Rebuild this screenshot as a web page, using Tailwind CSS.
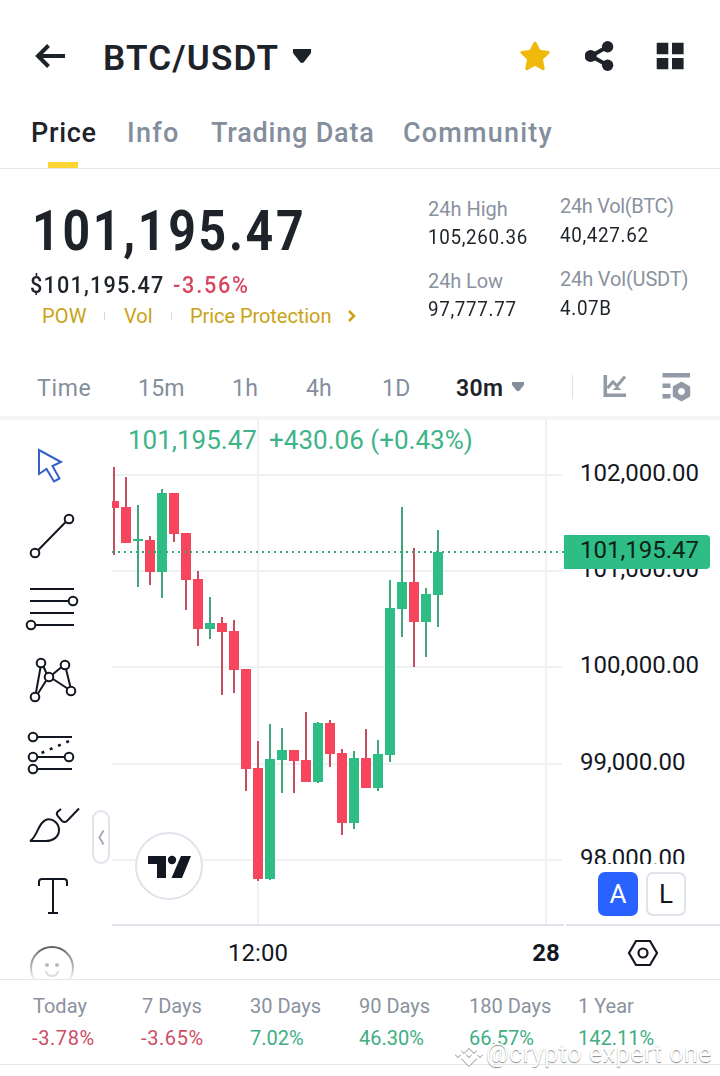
<!DOCTYPE html>
<html lang="en">
<head>
<meta charset="utf-8">
<title>BTC/USDT</title>
<script src="https://cdn.jsdelivr.net/npm/@tailwindcss/browser@4"></script>
</head>
<body class="w-[720px] h-[1076px] bg-white overflow-hidden whitespace-nowrap text-[#1e2329] font-['Roboto','Liberation_Sans',sans-serif]">
<div class="relative flex flex-col w-[720px] h-[1076px]">

  <!-- Header -->
  <header class="flex items-center h-[112px] shrink-0">
    <svg class="w-[32px] h-[26px] ml-[34px]" viewBox="34 43 32 26" fill="none" stroke="#1e2329" stroke-width="4"><path d="M65 56H38M48.500 45.500L38 56l10.500 10.500"/></svg>
    <h1 class="ml-[37px] w-[176px] mt-[5px] text-[35px] leading-[40px] font-semibold tracking-[1.2px]">BTC/USDT</h1>
    <svg class="w-[20px] h-[16px] ml-[13px]" viewBox="0 0 20 16" fill="#1e2329"><path d="M1 1h18v4L12 14q-2 2-4 0L1 5z"/></svg>
    <svg class="w-[32px] h-[32px] ml-[207px]" viewBox="519 40 32 32" fill="#f0b90b" stroke="#f0b90b" stroke-width="3" stroke-linejoin="round"><path d="M535 43l4.200 8.200 9 1.200-6.800 6.600 1.800 9.700-8.200-4.400-8.200 4.400 1.800-9.700-6.800-6.600 9-1.200z"/></svg>
    <svg class="w-[30px] h-[32px] ml-[34px]" viewBox="585 40 30 32" fill="#1e2329"><path d="M608 46.500L591 56l17 9.500" fill="none" stroke="#1e2329" stroke-width="4"/><circle cx="590.700" cy="56" r="6"/><circle cx="607.600" cy="46.700" r="5.700"/><circle cx="607.600" cy="65.300" r="5.700"/></svg>
    <svg class="w-[28px] h-[28px] ml-[41px]" viewBox="656 42 28 28" fill="#1e2329"><path d="M656.700 42.700h11.600v11.500h-11.600zM672 42.700h11.600v11.500H672zM656.700 58h11.600v11.300h-11.600zM672 58h11.600v11.300H672z"/></svg>
  </header>

  <!-- Tabs -->
  <nav class="flex h-[57px] shrink-0 border-b border-[#e6e8ea] text-[27px] leading-[42px] font-[460] text-[#848e9c]">
    <div class="ml-[31px] w-[66px] text-[#1e2329] flex flex-col"><span class="h-[50px] tracking-[0.7px]">Price</span><span class="w-[30px] h-[6px] ml-[17px] bg-[#fcd535]"></span></div>
    <span class="ml-[30px] w-[55px] tracking-[1.3px]">Info</span>
    <span class="ml-[29px] w-[162px] tracking-[0.800px]">Trading Data</span>
    <span class="ml-[30px] tracking-[1.200px]">Community</span>
  </nav>

  <!-- Price summary -->
  <section class="flex h-[188px] shrink-0">
    <div class="w-[428px] flex flex-col">
      <div class="ml-[32px] mt-[32px] h-[60px] w-[330px] text-[56px] leading-[60px] font-bold tracking-[3.200px] origin-left scale-x-[0.86]">101,195.47</div>
      <div class="flex ml-[30px] mt-[10px] h-[28px] text-[23.500px] leading-[28px] font-medium"><span class="w-[143px] tracking-[1.300px] origin-left scale-x-[0.92]">$101,195.47</span><span class="text-[#d9475f] tracking-[1.900px] origin-left scale-x-[0.92]">-3.56%</span></div>
      <div class="flex items-center ml-[42px] mt-[3px] h-[28px] text-[20px] leading-[28px] text-[#c9a316]">
        <span class="w-[62px] tracking-[0.200px]">POW</span><span class="w-px h-[8px] bg-[#d5d9df]"></span>
        <span class="w-[66px] pl-[19px]">Vol</span><span class="w-px h-[8px] bg-[#d5d9df]"></span>
        <span class="w-[157px] pl-[18px] tracking-[-0.060px]">Price Protection</span>
        <svg class="w-[10px] h-[12px] ml-[18px]" viewBox="0 0 10 12" fill="none" stroke="#c9a316" stroke-width="2.500"><path d="M2 1l5 5-5 5"/></svg>
      </div>
    </div>
    <div class="w-[132px] pt-[26px] text-[20px] leading-[28px] flex flex-col">
      <span class="text-[#8a929e]">24h High</span><span class="tracking-[0.720px] origin-left scale-x-[0.94]">105,260.36</span>
      <span class="mt-[16px] text-[#8a929e] tracking-[-0.100px]">24h Low</span><span class="tracking-[0.720px] origin-left scale-x-[0.94]">97,777.77</span>
    </div>
    <div class="pt-[23px] text-[20px] leading-[29px] flex flex-col">
      <span class="text-[#8a929e] tracking-[-0.320px]">24h Vol(BTC)</span><span class="tracking-[0.720px] origin-left scale-x-[0.94]">40,427.62</span>
      <span class="mt-[15px] text-[#8a929e] tracking-[-0.160px]">24h Vol(USDT)</span><span class="tracking-[0.720px] origin-left scale-x-[0.94]">4.07B</span>
    </div>
  </section>

  <!-- Intervals -->
  <nav class="flex items-center h-[63px] shrink-0 border-b-4 border-[#f5f5f6] text-[23px] text-[#848e9c]">
    <span class="pt-[5px] ml-[37px] w-[101px] tracking-[0.700px]">Time</span>
    <span class="pt-[5px] w-[94px] tracking-[0.200px]">15m</span>
    <span class="pt-[5px] w-[74px] tracking-[0.200px]">1h</span>
    <span class="pt-[5px] w-[76px]">4h</span>
    <span class="pt-[5px] w-[74px] tracking-[0.300px]">1D</span>
    <span class="pt-[5px] w-[55px] font-semibold text-[#1e2329] tracking-[0.300px]">30m</span>
    <svg class="w-[14px] h-[12px]" viewBox="0 0 14 12" fill="#848e9c"><path d="M1 1h12v3L8.500 9.500q-1.500 1.500-3 0L1 4z"/></svg>
    <span class="w-px h-[24px] ml-[47px] bg-[#dfe2e7]"></span>
    <svg class="w-[24px] h-[24px] ml-[30px]" viewBox="603 375 24 24" fill="none" stroke="#929aa5" stroke-width="3.600"><path d="M605.300 375v20.300H626"/><path d="M607.500 388l5.500-6 4 4 8-9.500" stroke-width="3"/><path d="M612.500 390l4.500-4 4.500 4z" fill="#929aa5" stroke="none"/></svg>
    <svg class="w-[30px] h-[30px] ml-[35px]" viewBox="662 372 30 30" fill="#929aa5"><path d="M662.500 373h27.500v4.500h-27.500zM662.500 383.500h8v4.500h-8zM662.500 394h8v4.500h-8z"/><path fill-rule="evenodd" d="M681.500 381.500l8.700 5v10l-8.700 5-8.700-5v-10zM681.500 388a3.500 3.500 0 1 0 .01 0z"/></svg>
  </nav>

  <!-- Chart -->
  <main class="flex h-[560px] shrink-0 border-b border-[#e6e8ea] text-[#131722]">
    <!-- Drawing tools -->
    <aside class="relative w-[112px] h-[559px] pt-[8px] flex flex-col overflow-hidden">
      <svg class="w-[112px] h-[72px] shrink-0" viewBox="0 428 112 72" fill="none" stroke="#3560cc" stroke-width="2"><path d="M39 450v24l7.500-5 7.500 12.500 5.500-3-7-12.500 8.500-4z"/></svg>
      <svg class="w-[112px] h-[72px] shrink-0" viewBox="0 500 112 72" fill="none" stroke="#131722" stroke-width="2"><path d="M38.300 550l27.400-28"/><circle cx="35" cy="553" r="4.300"/><circle cx="69" cy="519" r="4.300"/></svg>
      <svg class="w-[112px] h-[72px] shrink-0" viewBox="0 572 112 72" fill="none" stroke="#131722" stroke-width="2"><path d="M30 589h44M30 601h38M30 613h44M36 625h38"/><circle cx="73" cy="601" r="4.300"/><circle cx="31" cy="625" r="4.300"/></svg>
      <svg class="w-[112px] h-[72px] shrink-0" viewBox="0 644 112 72" fill="none" stroke="#131722" stroke-width="2"><path d="M40.500 667.500L36 692.500M43.500 666.500l3 7M52.500 674.500l8.500-7M66 669l4.200 17M53 679l14.500 9.500M46.200 680.500L38 693.500"/><circle cx="41" cy="663" r="4.300"/><circle cx="65" cy="665" r="4.300"/><circle cx="49" cy="677" r="4.300"/><circle cx="71" cy="691" r="4.300"/><circle cx="35" cy="697" r="4.300"/></svg>
      <svg class="w-[112px] h-[72px] shrink-0" viewBox="0 716 112 72" fill="none" stroke="#131722" stroke-width="2"><path d="M38 737h34M38 757h26M38 769h34"/><path d="M41.500 753l30-13" stroke-width="2.600" stroke-dasharray="3 6"/><circle cx="33" cy="737" r="4.300"/><circle cx="33" cy="757" r="4.300"/><circle cx="69" cy="757" r="4.300"/><circle cx="33" cy="769" r="4.300"/></svg>
      <svg class="w-[112px] h-[72px] shrink-0" viewBox="0 788 112 72" fill="none" stroke="#131722" stroke-width="2"><path d="M30 841c7-3 8.500-20 17-21.500 6.500-1 12 4 12 10.500 0 7-6 11-13 11z"/><path d="M61 809l-3.300 2.800q-1.800 1.700 0 4l4.300 5.200q2.500 2 5 0L79 808.500"/></svg>
      <svg class="w-[112px] h-[72px] shrink-0" viewBox="0 860 112 72" fill="none" stroke="#131722" stroke-width="2"><path d="M39 886v-4q0-3 3-3h22q3 0 3 3v4M53 879v34M48 913h10"/></svg>
      <svg class="w-[112px] h-[47px] shrink-0" viewBox="0 932 112 47" fill="none"><defs><linearGradient id="fade" x1="0" x2="0" y1="944" y2="979" gradientUnits="userSpaceOnUse"><stop offset="0" stop-color="#555"/><stop offset="1" stop-color="#eee"/></linearGradient></defs><circle cx="52" cy="968" r="21" stroke="url(#fade)" stroke-width="2"/><circle cx="47" cy="965" r="2" fill="#bbb"/><circle cx="57" cy="965" r="2" fill="#bbb"/><path d="M46 971q1 5 6 5t6-5" stroke="#ddd" stroke-width="2"/></svg>
      <!-- Collapse handle over the tool column -->
      <span class="absolute left-[92px] top-[390px] w-[18px] h-[54px] rounded-[9px] border-2 border-[#e0e3eb] bg-white flex items-center justify-center"><svg class="w-[7px] h-[15px]" viewBox="0 0 7 15" fill="none" stroke="#a3a6af" stroke-width="1.800"><path d="M5.500 .500l-4 7 4 7"/></svg></span>
    </aside>

    <div class="flex flex-col w-[608px]">
      <div class="flex h-[504px]">
        <!-- Plot -->
        <div class="relative w-[452px] h-[504px]">
          <svg id="plot" class="w-[452px] h-[504px]" viewBox="112 420 452 504">
            <path d="M112 475h450M112 571h450M112 667h450M112 764h450M112 860h450M258 420v504M546 420v504" stroke="#f0f1f2" stroke-width="2" fill="none"/>
            <g id="candles"></g>
            <path d="M112 552h452" stroke="#35a67c" stroke-width="2" stroke-dasharray="2 4"/>
            <circle cx="169" cy="866" r="33" fill="#fff" stroke="#e0e3eb" stroke-width="2"/>
            <path fill="#131722" d="M148 856h18v22h-9v-14h-9zM181 856h10l-9 22h-10.500z"/><circle cx="172" cy="860" r="4.200" fill="#131722"/>
          </svg>
          <div class="absolute left-[16px] top-[5px] flex text-[26px] leading-[30px] text-[#3fb388]"><span class="w-[141px]">101,195.47</span><span class="tracking-[0.020px]">+430.06 (+0.43%)</span></div>
        </div>
        <!-- Price scale -->
        <div class="relative w-[156px] flex flex-col">
          <div class="h-[444px] pt-[5px] pl-[16px] overflow-hidden text-[24px]">
            <div class="h-[96px] leading-[96px]">102,000.00</div>
            <div class="h-[96px] leading-[96px]">101,000.00</div>
            <div class="h-[96px] leading-[96px]">100,000.00</div>
            <div class="h-[96px] leading-[98px]">99,000.00</div>
            <div class="h-[96px] leading-[98px]">98,000.00</div>
          </div>
          <div class="flex gap-[8px] mt-[8px] ml-[34px] text-[26px] leading-[44px] text-center">
            <span class="w-[40px] h-[44px] rounded-[7px] bg-[#2962ff] text-white">A</span>
            <span class="w-[40px] h-[44px] rounded-[7px] border-2 border-[#e0e3eb] leading-[40px]">L</span>
          </div>
          <div class="absolute left-0 top-[115px] w-[146px] h-[34px] pl-[16px] rounded-r-[4px] bg-[#2ebd85] text-[24px] leading-[31px] text-[#0c2219]">101,195.47</div>
        </div>
      </div>
      <div class="flex h-[2px] gap-[2px]"><span class="w-[452px] bg-[#e0e3eb]"></span><span class="w-[154px] bg-[#e0e3eb]"></span></div>
      <!-- Time scale -->
      <div class="flex items-center h-[53px] text-[24px]">
        <span class="ml-[106px] w-[80px] text-center">12:00</span>
        <span class="ml-[208px] w-[80px] text-center font-bold">28</span>
        <svg class="w-[32px] h-[28px] ml-[41px]" viewBox="0 0 32 28" fill="none" stroke="#131722" stroke-width="2.200"><path d="M9 2h14l7 12-7 12H9L2 14z"/><circle cx="16" cy="14" r="4.500"/></svg>
      </div>
    </div>
  </main>

  <!-- Performance -->
  <footer class="flex h-[85px] shrink-0 pt-[11px] border-b border-[#e6e8ea] text-[20px] leading-[30px] text-[#8a929e]">
    <div class="ml-[32px] w-[109px] flex flex-col"><span class="pl-[1px]">Today</span><span class="mt-[2px] text-[#cc4e64] tracking-[0.600px]">-3.78%</span></div>
    <div class="w-[109px] flex flex-col"><span class="pl-[1px]">7 Days</span><span class="mt-[2px] text-[#cc4e64] tracking-[0.600px]">-3.65%</span></div>
    <div class="w-[109px] flex flex-col"><span>30 Days</span><span class="mt-[2px] text-[#3fae83]">7.02%</span></div>
    <div class="w-[110px] flex flex-col"><span>90 Days</span><span class="mt-[2px] text-[#3fae83]">46.30%</span></div>
    <div class="w-[109px] flex flex-col"><span>180 Days</span><span class="mt-[2px] text-[#3fae83]">66.57%</span></div>
    <div class="flex flex-col"><span>1 Year</span><span class="mt-[2px] text-[#3fae83]">142.11%</span></div>
  </footer>

  <!-- Author mark laid over the footer -->
  <div class="absolute left-[454px] top-[1039px] flex items-center text-white">
    <svg class="w-[30px] h-[30px] drop-shadow-[0_1px_0.500px_rgba(0,0,0,0.45)]" viewBox="0 0 30 30" fill="#fff"><path d="M15 3l8 8-3 3-5-5-5 5-3-3zM15 12l3 3-3 3-3-3zM4 12l3 3-3 3-3-3zM26 12l3 3-3 3-3-3zM7 19l3-3 5 5 5-5 3 3-8 8z"/></svg>
    <span class="ml-[2px] text-[25px] leading-[30px] tracking-[0.550px] [text-shadow:0_1px_1px_rgba(0,0,0,0.45)]">@crypto expert one</span>
  </div>
</div>
<script>
  // [high, low, body top, body bottom, rising]
  const candles = [
    [467,555,501,508,0],[477,543,507,543,0],[505,587,539,541,1],[536,585,540,572,0],
    [489,598,493,572,1],[493,542,493,534,0],[533,610,533,580,0],[571,646,579,629,0],
    [597,639,623,629,1],[617,695,623,632,0],[620,693,631,670,0],[669,791,669,769,0],
    [741,881,768,879,0],[724,880,759,879,1],[728,793,750,760,1],[750,793,750,761,0],
    [712,782,760,782,0],[722,783,723,782,1],[720,767,723,754,0],[749,835,753,823,0],
    [751,829,758,823,1],[729,788,758,788,0],[740,791,754,788,1],[580,762,608,755,1],
    [507,637,582,609,1],[548,667,582,622,0],[588,657,594,622,1],[530,627,552,595,1]
  ];
  document.getElementById('candles').innerHTML = candles.map(([h, l, t, b, up], i) => {
    const x = 114 + i * 12;
    return `<rect x="${x - 1}" y="${h}" width="2" height="${l - h}" fill="${up ? '#3fa67e' : '#c44f60'}"/>` +
           `<rect x="${x - 5}" y="${t}" width="10" height="${b - t}" fill="${up ? '#2ebd85' : '#f6465d'}"/>`;
  }).join('');
</script>
</body>
</html>
